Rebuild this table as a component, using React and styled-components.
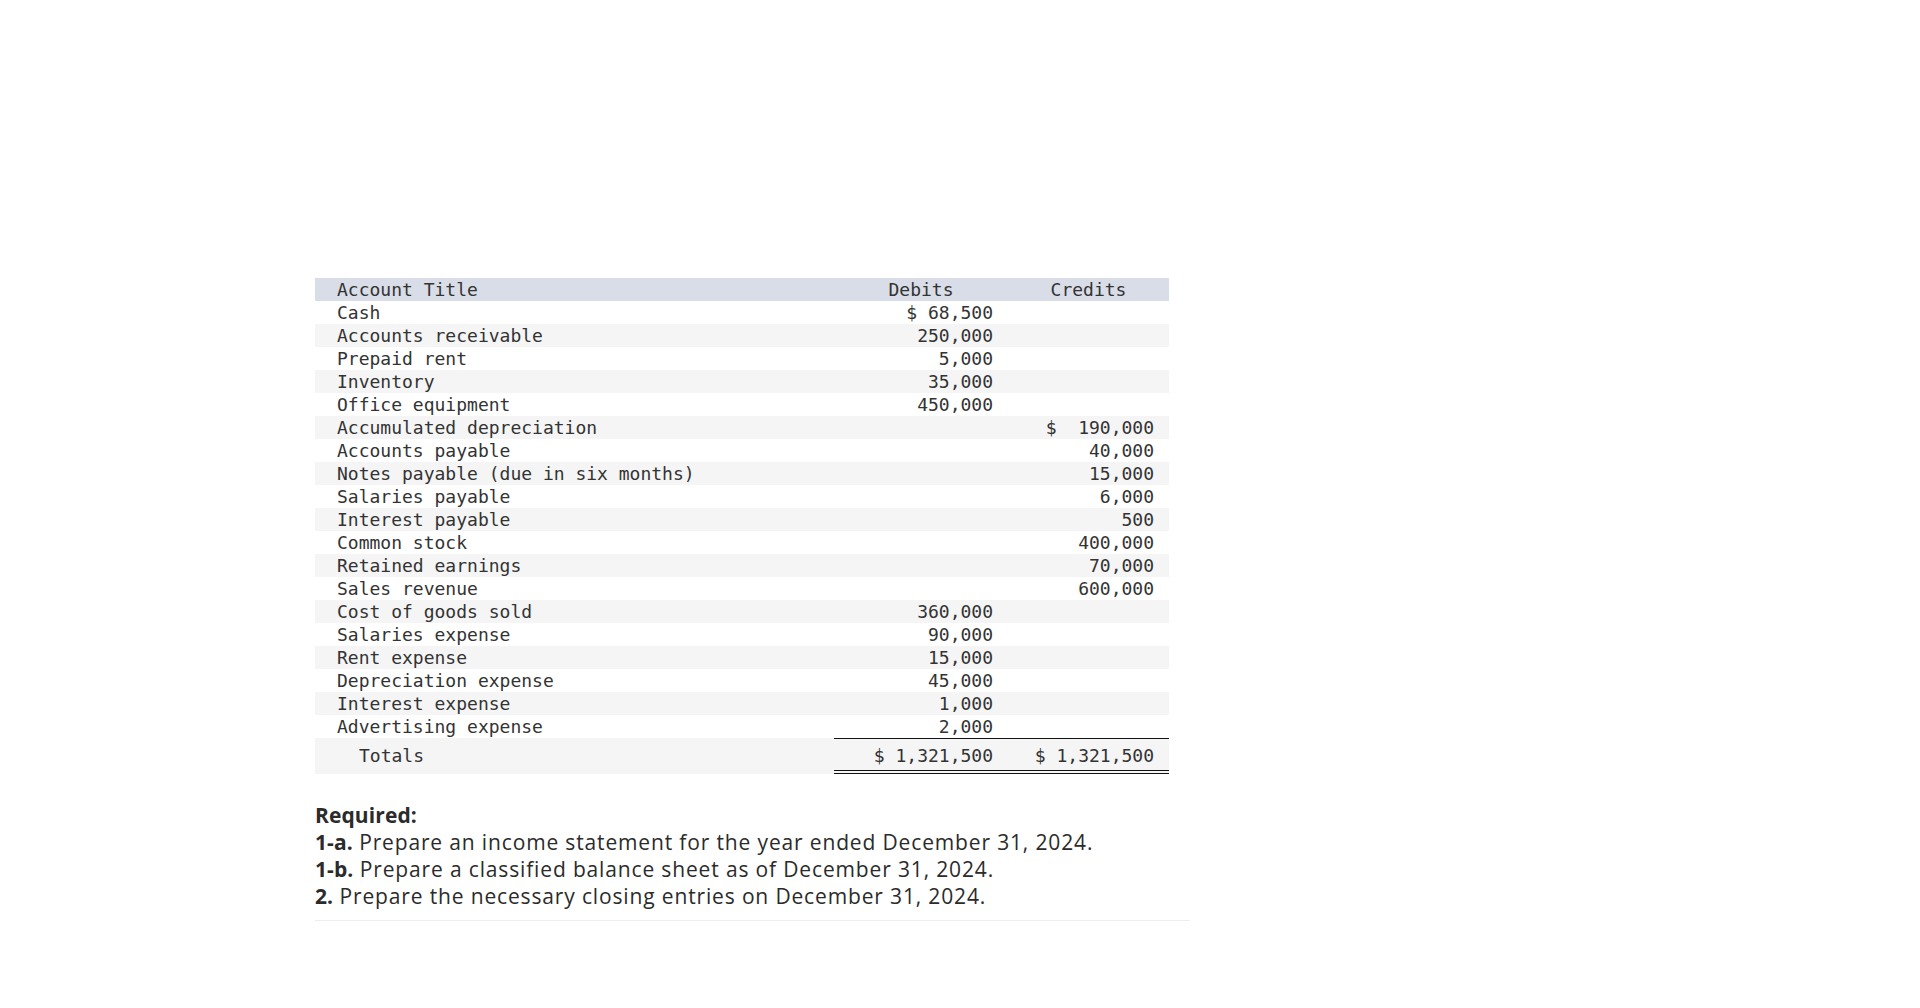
import React from "react";
import styled, { createGlobalStyle } from "styled-components";

const GlobalStyle = createGlobalStyle`
  html, body {
    margin: 0;
    padding: 0;
    background: #fff;
  }
  body {
    font-family: "Open Sans", "Lato", sans-serif;
    color: #333;
  }
`;

const Page = styled.div`
  padding: 278px 0 0 315px;
`;

const Problem = styled.div`
  width: 875px;
  border-bottom: 1px solid #eeeeee;
  padding-bottom: 10px;
`;

const Table = styled.div`
  display: grid;
  grid-template-columns: 519px 174px 161px;
  width: 854px;
  font-family: "DejaVu Sans Mono", "Liberation Mono", monospace;
  font-size: 18px;
  line-height: 23px;
  color: #333;
  white-space: pre;
`;

const Row = styled.div`
  display: contents;
`;

const Cell = styled.div`
  background: ${(p) => (p.$head ? "#d9dde7" : p.$shade ? "#f5f5f5" : "#fff")};
  text-align: ${(p) => p.$align || "left"};
  padding: ${(p) =>
    p.$align === "right" ? "0 15px 0 0" : p.$align === "center" ? "0" : "0 0 0 22px"};
  height: 23px;
`;

const TotalCell = styled.div`
  background: #f5f5f5;
  height: 31px;
  line-height: 34px;
  text-align: ${(p) => (p.$label ? "left" : "right")};
  padding: ${(p) => (p.$label ? "1px 0 4px 44px" : "0 15px 0 0")};
  border-top: ${(p) => (p.$label ? "none" : "1px solid #111")};
  border-bottom: ${(p) => (p.$label ? "none" : "4px double #111")};
`;

const Required = styled.div`
  margin-top: 28px;
  font-size: 21px;
  letter-spacing: 0.85px;
  line-height: 27px;
  color: #2b2b2b;

  strong {
    font-weight: 700;
    letter-spacing: 0.1px;
  }
`;

const Line = styled.div`
  white-space: nowrap;
`;

const rows = [
  ["Cash", "$ 68,500", ""],
  ["Accounts receivable", "250,000", ""],
  ["Prepaid rent", "5,000", ""],
  ["Inventory", "35,000", ""],
  ["Office equipment", "450,000", ""],
  ["Accumulated depreciation", "", "$  190,000"],
  ["Accounts payable", "", "40,000"],
  ["Notes payable (due in six months)", "", "15,000"],
  ["Salaries payable", "", "6,000"],
  ["Interest payable", "", "500"],
  ["Common stock", "", "400,000"],
  ["Retained earnings", "", "70,000"],
  ["Sales revenue", "", "600,000"],
  ["Cost of goods sold", "360,000", ""],
  ["Salaries expense", "90,000", ""],
  ["Rent expense", "15,000", ""],
  ["Depreciation expense", "45,000", ""],
  ["Interest expense", "1,000", ""],
  ["Advertising expense", "2,000", ""],
];

const tasks = [
  ["1-a.", "Prepare an income statement for the year ended December 31, 2024."],
  ["1-b.", "Prepare a classified balance sheet as of December 31, 2024."],
  ["2.", "Prepare the necessary closing entries on December 31, 2024."],
];

export default function App() {
  return (
    <>
      <GlobalStyle />
      <Page>
        <Problem>
          <Table>
            <Row>
              <Cell $head>Account Title</Cell>
              <Cell $head $align="center">Debits</Cell>
              <Cell $head $align="center">Credits</Cell>
            </Row>
            {rows.map(([title, debit, credit], i) => (
              <Row key={title}>
                <Cell $shade={i % 2 === 1}>{title}</Cell>
                <Cell $shade={i % 2 === 1} $align="right">{debit}</Cell>
                <Cell $shade={i % 2 === 1} $align="right">{credit}</Cell>
              </Row>
            ))}
            <Row>
              <TotalCell $label>Totals</TotalCell>
              <TotalCell>$ 1,321,500</TotalCell>
              <TotalCell>$ 1,321,500</TotalCell>
            </Row>
          </Table>
          <Required>
            <Line>
              <strong>Required:</strong>
            </Line>
            {tasks.map(([num, text]) => (
              <Line key={num}>
                <strong>{num}</strong> {text}
              </Line>
            ))}
          </Required>
        </Problem>
      </Page>
    </>
  );
}
